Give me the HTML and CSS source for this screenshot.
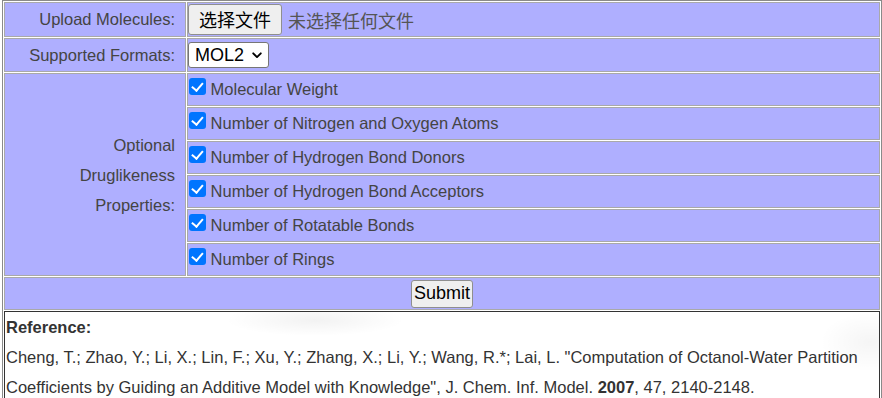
FILE: index.html
```html
<!DOCTYPE html>
<html>
<head>
<meta charset="utf-8">
<title>Upload Molecules</title>
<link rel="stylesheet" href="styles.css">
</head>
<body>
<table class="form">
  <tr class="row-upload">
    <td class="lbl">Upload Molecules:</td>
    <td class="val"><span class="filebtn">选择文件</span><span class="filename">未选择任何文件</span></td>
  </tr>
  <tr class="row-format">
    <td class="lbl">Supported Formats:</td>
    <td class="val"><span class="select-wrap"><select class="fmt"><option>MOL2</option></select><svg class="chev" width="10" height="7" viewBox="0 0 10 7"><path d="M1.2 1.3 L5 5.1 L8.8 1.3" fill="none" stroke="#000" stroke-width="1.9" stroke-linecap="round" stroke-linejoin="round"/></svg></span></td>
  </tr>
  <tr class="row-opt">
    <td class="lbl lbl-multi" rowspan="6">Optional<br>Druglikeness<br>Properties:</td>
    <td class="val opt"><label><input class="cb" type="checkbox" checked> Molecular Weight</label></td>
  </tr>
  <tr class="row-opt">
    <td class="val opt"><label><input class="cb" type="checkbox" checked> Number of Nitrogen and Oxygen Atoms</label></td>
  </tr>
  <tr class="row-opt">
    <td class="val opt"><label><input class="cb" type="checkbox" checked> Number of Hydrogen Bond Donors</label></td>
  </tr>
  <tr class="row-opt">
    <td class="val opt"><label><input class="cb" type="checkbox" checked> Number of Hydrogen Bond Acceptors</label></td>
  </tr>
  <tr class="row-opt">
    <td class="val opt"><label><input class="cb" type="checkbox" checked> Number of Rotatable Bonds</label></td>
  </tr>
  <tr class="row-opt">
    <td class="val opt"><label><input class="cb" type="checkbox" checked> Number of Rings</label></td>
  </tr>
  <tr class="row-submit">
    <td class="submit-cell" colspan="2"><button class="submit" type="button">Submit</button></td>
  </tr>
  <tr class="row-ref">
    <td class="ref" colspan="2"><b>Reference:</b><br>Cheng, T.; Zhao, Y.; Li, X.; Lin, F.; Xu, Y.; Zhang, X.; Li, Y.; Wang, R.*; Lai, L. "Computation of Octanol-Water Partition Coefficients by Guiding an Additive Model with Knowledge", J. Chem. Inf. Model. <b>2007</b>, 47, 2140-2148.</td>
  </tr>
</table>
</body>
</html>
```

FILE: styles.css
```css
html, body {
  margin: 0;
  padding: 0;
  background: #ffffff;
}

body {
  padding-left: 2px;
  font-family: "Liberation Sans", Arial, sans-serif;
  font-size: 16.5px;
  color: #333333;
}

.form {
  width: 880px;
  box-sizing: border-box;
  border: 1px solid #8a8a8a;
  border-collapse: separate;
  border-spacing: 1px;
}

.form td {
  padding: 0;
  border: 1px solid #a9a9a9;
  background: #afafff;
}

.lbl {
  width: 170px;
  padding-right: 10px !important;
  text-align: right;
  color: #444444;
}

.lbl-multi {
  line-height: 30px;
  vertical-align: middle;
}

.row-upload td {
  height: 33px;
}

.row-format td {
  height: 32px;
}

.row-opt td {
  height: 31px;
}

.opt {
  line-height: 30px;
  vertical-align: top;
  color: #444444;
}

.cb {
  appearance: none;
  -webkit-appearance: none;
  position: relative;
  display: inline-block;
  box-sizing: border-box;
  width: 17px;
  height: 17px;
  margin: 0 0 0 1px;
  border-radius: 3px;
  background: #0075ff;
  vertical-align: 0;
}

.cb::after {
  content: "";
  position: absolute;
  left: 5px;
  top: 1.5px;
  width: 4.5px;
  height: 9px;
  border: solid #ffffff;
  border-width: 0 2.8px 2.8px 0;
  transform: rotate(40deg);
}

.filebtn {
  display: inline-block;
  box-sizing: border-box;
  height: 31px;
  padding: 0 10px;
  line-height: 29px;
  border: 1px solid #8f8f8f;
  border-radius: 3px;
  background: #efefef;
  color: #000000;
  font-family: "Noto Sans CJK SC", "Liberation Sans", sans-serif;
  font-size: 18px;
  vertical-align: middle;
}

.filename {
  margin-left: 6px;
  color: #555555;
  font-family: "Noto Sans CJK SC", "Liberation Sans", sans-serif;
  font-size: 18px;
  vertical-align: middle;
}

.select-wrap {
  position: relative;
  display: inline-block;
  vertical-align: middle;
}

.fmt {
  appearance: none;
  -webkit-appearance: none;
  display: block;
  box-sizing: border-box;
  width: 81px;
  height: 26px;
  margin: 0;
  padding: 0 0 0 6px;
  font-family: "Liberation Sans", Arial, sans-serif;
  font-size: 18px;
  color: #000000;
  background: #ffffff;
  border: 1px solid #767676;
  border-radius: 3px;
}

.chev {
  position: absolute;
  right: 7px;
  top: 10px;
  pointer-events: none;
}

.row-submit td {
  height: 31px;
}

.submit-cell {
  text-align: center;
  vertical-align: middle;
}

.submit {
  height: 28px;
  padding: 0 2px;
  font-family: "Liberation Sans", Arial, sans-serif;
  font-size: 18px;
  color: #000000;
  background: #efefef;
  border: 1px solid #8f8f8f;
  border-radius: 3px;
  vertical-align: middle;
}

.form td.ref {
  border: 1px solid #333333;
  padding-left: 1px;
  line-height: 30px;
  color: #333333;
  background:
    radial-gradient(ellipse 90px 16px at 310px 8px, rgba(0,0,0,0.05), rgba(0,0,0,0) 100%),
    radial-gradient(ellipse 50px 30px at 865px 30px, rgba(0,0,0,0.04), rgba(0,0,0,0) 100%),
    #ffffff;
  vertical-align: top;
}

.ref b {
  color: #333333;
}
```
